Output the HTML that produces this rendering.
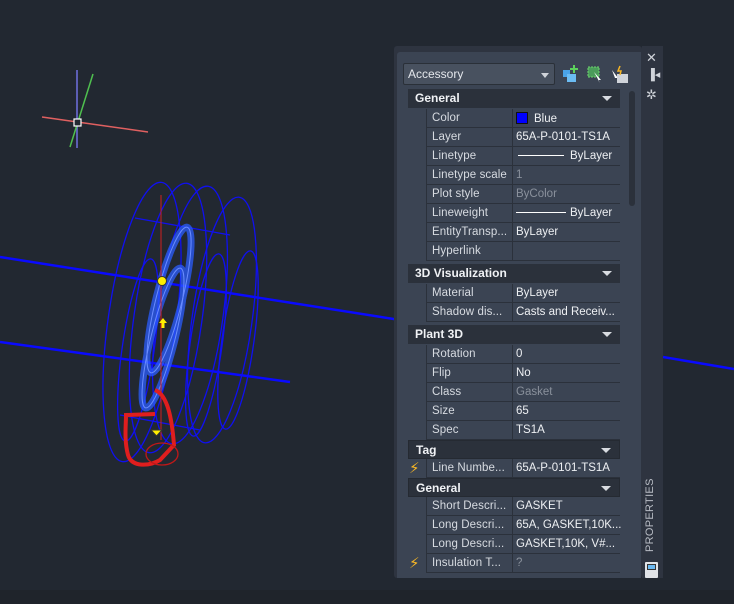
<!DOCTYPE html>
<html><head><meta charset="utf-8"><style>
*{margin:0;padding:0;box-sizing:border-box}
body{width:734px;height:604px;background:#222831;position:relative;overflow:hidden;font-family:"Liberation Sans","DejaVu Sans",sans-serif;font-size:11.5px;color:#e6e9ee}
.abs{position:absolute}
#frame{left:394px;top:46px;width:248px;height:532px;background:#2e3440;border-radius:3px}
#inner{left:397px;top:52px;width:244px;height:526px;background:#3b4453;border-radius:3px 0 0 0}
#strip{left:642px;top:46px;width:21px;height:532px;background:#2e3440}
.dd{left:403px;top:63px;width:152px;height:22px;background:#48515f;border:1px solid #2a3038;border-radius:2px;padding:3px 4px;color:#e4e7ec;font-size:12px}
.dd:after{content:"";position:absolute;right:5px;top:9px;border-left:4px solid transparent;border-right:4px solid transparent;border-top:5px solid #cfd3d9}
.hdr{left:408px;width:212px;height:19px;background:#2b313b;font-weight:bold;font-size:12px;padding:2px 0 0 7px;color:#f0f2f5}
.hdr:after{content:"";position:absolute;right:8px;top:7px;border-left:5px solid transparent;border-right:5px solid transparent;border-top:5px solid #d8dbe0}
.row{left:426px;width:194px;height:19px;border-bottom:1px solid #2b313b;border-left:1px solid #2b313b}
.row .l{position:absolute;left:5px;top:3px;width:80px;white-space:nowrap;overflow:hidden;color:#d7dbe1;letter-spacing:.1px}
.row .v{position:absolute;left:85px;top:0;width:109px;height:18px;border-left:1px solid #2b313b;padding:3px 0 0 3px;white-space:nowrap;overflow:hidden;color:#eef0f3}
.dim{color:#8a919c!important}
.bolt{position:absolute;left:-18px;top:0px;color:#f5b526;font-size:15px}
</style></head><body>
<svg class="abs" style="left:0;top:0" width="734" height="604">
<rect x="0" y="590" width="734" height="14" fill="#1f242b"/>
<line x1="0" y1="257" x2="400" y2="320" stroke="#0a0aff" stroke-width="2.5"/>
<line x1="663" y1="357" x2="734" y2="369" stroke="#0a0aff" stroke-width="2.5"/>
<line x1="0" y1="342" x2="290" y2="382" stroke="#0a0aff" stroke-width="2.5"/>
<line x1="77" y1="70" x2="77" y2="148" stroke="#7070e0" stroke-width="1.5"/>
<line x1="93" y1="74" x2="70" y2="147" stroke="#4fc04f" stroke-width="1.5"/>
<line x1="42" y1="117" x2="148" y2="132" stroke="#e06060" stroke-width="1.5"/>
<rect x="74" y="119" width="7" height="7" fill="#222831" stroke="#fff" stroke-width="1.2"/>
<g fill="none" stroke="#1010f0" stroke-width="1.3">
<ellipse cx="142" cy="322" rx="34" ry="141" transform="rotate(8 142 322)"/>
<ellipse cx="168" cy="318" rx="34" ry="136" transform="rotate(8 168 318)"/>
<ellipse cx="190" cy="315" rx="33" ry="130" transform="rotate(8 190 315)"/>
<ellipse cx="222" cy="320" rx="30" ry="124" transform="rotate(8 222 320)"/>
<ellipse cx="138" cy="350" rx="16" ry="92" transform="rotate(8 138 350)"/>
<ellipse cx="206" cy="345" rx="16" ry="92" transform="rotate(8 206 345)"/>
<ellipse cx="238" cy="340" rx="16" ry="90" transform="rotate(8 238 340)"/>
<line x1="135" y1="218" x2="230" y2="235"/>
<line x1="120" y1="415" x2="200" y2="430"/>
</g>
<g fill="none" stroke="#2a5cff" stroke-width="7" opacity=".75">
<ellipse cx="169" cy="300" rx="13" ry="75" transform="rotate(14 169 300)"/>
<ellipse cx="163" cy="338" rx="12" ry="72" transform="rotate(14 163 338)"/>
</g>
<g fill="none" stroke="#6a8cff" stroke-width="1">
<ellipse cx="169" cy="300" rx="13" ry="75" transform="rotate(14 169 300)"/>
<ellipse cx="163" cy="338" rx="12" ry="72" transform="rotate(14 163 338)"/>
</g>
<line x1="161" y1="195" x2="161" y2="440" stroke="#d02020" stroke-width="1"/>
<circle cx="162" cy="281" r="4.5" fill="#ffee00" stroke="#333" stroke-width="1"/>
<path d="M163 318 l-4 5 h2.5 v5 h3 v-5 h2.5z" fill="#ffee00"/>
<path d="M151 430 h11 l-5.5 6z" fill="#ffee00" stroke="#333"/>
<path d="M155 390 C168 395 172 420 174 445 L160 460 C150 466 132 468 128 455 C124 440 126 425 126 415 L155 414" fill="none" stroke="#e01e1e" stroke-width="4"/>
<ellipse cx="162" cy="454" rx="16" ry="11" fill="none" stroke="#c01818" stroke-width="1.3"/>
</svg>
<div class="abs" id="frame"></div>
<div class="abs" id="inner"></div>
<div class="abs" id="strip"></div>
<div class="abs" style="left:629px;top:91px;width:6px;height:115px;background:#2b313b;border-radius:3px"></div>
<div class="abs dd">Accessory</div>
<svg class="abs" style="left:562px;top:64px" width="70" height="20">
<rect x="1" y="6" width="7" height="7" fill="#4aa3e8"/><rect x="5" y="10" width="9" height="8" fill="#6bbcf3"/><path d="M12 1v8M8 5h8" stroke="#5cd25c" stroke-width="2"/>
<rect x="26" y="3" width="11" height="10" fill="#4a9c5a" stroke="#6fd36f" stroke-dasharray="2 1"/><path d="M32 8l7 8-3 0 2 3z" fill="#fff"/>
<path d="M50 6l6 8-3 0z" fill="#fff"/><rect x="55" y="10" width="11" height="9" fill="#d0d4da"/><path d="M58 2l-2 5h3l-1 4" stroke="#f5b526" fill="none" stroke-width="1.5"/>
</svg>
<div class="abs" style="left:646px;top:50px;color:#cfd3d9;font-size:13px;font-weight:bold">✕</div>
<div class="abs" style="left:647px;top:68px;color:#cfd3d9;font-size:11px">▐◂</div>
<div class="abs" style="left:646px;top:87px;color:#cfd3d9;font-size:13px">✲</div>
<div class="abs" style="left:644px;top:552px;transform:rotate(-90deg);transform-origin:left top;color:#b8bcc4;font-size:11px;letter-spacing:.3px">PROPERTIES</div>
<div class="abs" style="left:645px;top:562px;width:13px;height:16px;background:#e0e3e7;border-radius:1px"><div style="margin:2px;width:9px;height:6px;background:#6ab8f0;border:1px solid #333"></div></div>

<div class="abs hdr" style="top:89px">General</div>
<div class="abs row" style="top:109px"><span class="l">Color</span><span class="v"><span style="display:inline-block;width:12px;height:12px;background:#00f;border:1px solid #111;vertical-align:-2px;margin-right:6px"></span>Blue</span></div>
<div class="abs row" style="top:128px"><span class="l">Layer</span><span class="v">65A-P-0101-TS1A</span></div>
<div class="abs row" style="top:147px"><span class="l">Linetype</span><span class="v"><span style="display:inline-block;width:46px;border-top:1px solid #fff;vertical-align:3px;margin:0 6px 0 2px"></span>ByLayer</span></div>
<div class="abs row" style="top:166px"><span class="l">Linetype scale</span><span class="v dim">1</span></div>
<div class="abs row" style="top:185px"><span class="l">Plot style</span><span class="v dim">ByColor</span></div>
<div class="abs row" style="top:204px"><span class="l">Lineweight</span><span class="v"><span style="display:inline-block;width:50px;border-top:1px solid #fff;vertical-align:3px;margin-right:4px"></span>ByLayer</span></div>
<div class="abs row" style="top:223px"><span class="l">EntityTransp...</span><span class="v">ByLayer</span></div>
<div class="abs row" style="top:242px"><span class="l">Hyperlink</span><span class="v"></span></div>
<div class="abs hdr" style="top:264px">3D Visualization</div>
<div class="abs row" style="top:284px"><span class="l">Material</span><span class="v">ByLayer</span></div>
<div class="abs row" style="top:303px"><span class="l">Shadow dis...</span><span class="v">Casts and Receiv...</span></div>
<div class="abs hdr" style="top:325px">Plant 3D</div>
<div class="abs row" style="top:345px"><span class="l">Rotation</span><span class="v">0</span></div>
<div class="abs row" style="top:364px"><span class="l">Flip</span><span class="v">No</span></div>
<div class="abs row" style="top:383px"><span class="l">Class</span><span class="v dim">Gasket</span></div>
<div class="abs row" style="top:402px"><span class="l">Size</span><span class="v">65</span></div>
<div class="abs row" style="top:421px"><span class="l">Spec</span><span class="v">TS1A</span></div>
<div class="abs hdr" style="top:440px;border:1px solid #252a32">Tag</div>
<div class="abs row" style="top:459px"><span class="bolt">⚡</span><span class="l">Line Numbe...</span><span class="v">65A-P-0101-TS1A</span></div>
<div class="abs hdr" style="top:478px;border:1px solid #252a32">General</div>
<div class="abs row" style="top:497px"><span class="l">Short Descri...</span><span class="v">GASKET</span></div>
<div class="abs row" style="top:516px"><span class="l">Long Descri...</span><span class="v">65A, GASKET,10K...</span></div>
<div class="abs row" style="top:535px"><span class="l">Long Descri...</span><span class="v">GASKET,10K, V#...</span></div>
<div class="abs row" style="top:554px"><span class="bolt">⚡</span><span class="l">Insulation T...</span><span class="v dim">?</span></div>
</body></html>
